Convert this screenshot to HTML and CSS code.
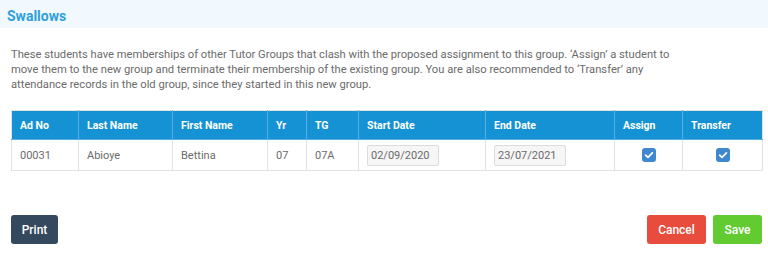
FILE: index.html
```html
<!DOCTYPE html>
<html>
<head>
<meta charset="utf-8">
<link rel="stylesheet" href="styles.css">
</head>
<body>
<div class="title-bar"><h1 class="title">Swallows</h1></div>
<div class="content">
  <p class="intro">These students have memberships of other Tutor Groups that clash with the proposed assignment to this group. ‘Assign’ a student to move them to the new group and terminate their membership of the existing group. You are also recommended to ‘Transfer’ any attendance records in the old group, since they started in this new group.</p>
  <table class="grid">
    <colgroup>
      <col class="c-ad"><col class="c-last"><col class="c-first"><col class="c-yr"><col class="c-tg"><col class="c-start"><col class="c-end"><col class="c-assign"><col class="c-transfer">
    </colgroup>
    <thead>
      <tr>
        <th>Ad No</th><th>Last Name</th><th>First Name</th><th>Yr</th><th>TG</th><th>Start Date</th><th>End Date</th><th>Assign</th><th>Transfer</th>
      </tr>
    </thead>
    <tbody>
      <tr>
        <td>00031</td><td>Abioye</td><td>Bettina</td><td>07</td><td>07A</td>
        <td><span class="date">02/09/2020</span></td>
        <td><span class="date">23/07/2021</span></td>
        <td class="center"><span class="check"><svg viewBox="0 0 14 14" width="14" height="14"><path d="M3.6 7.2 L6 9.4 L10.4 4.9" fill="none" stroke="#fff" stroke-width="1.7" stroke-linecap="round" stroke-linejoin="round"/></svg></span></td>
        <td class="center"><span class="check"><svg viewBox="0 0 14 14" width="14" height="14"><path d="M3.6 7.2 L6 9.4 L10.4 4.9" fill="none" stroke="#fff" stroke-width="1.7" stroke-linecap="round" stroke-linejoin="round"/></svg></span></td>
      </tr>
    </tbody>
  </table>
  <div class="actions">
    <button class="btn btn-print">Print</button>
    <div class="right">
      <button class="btn btn-cancel">Cancel</button>
      <button class="btn btn-save">Save</button>
    </div>
  </div>
</div>
</body>
</html>
```
FILE: styles.css
```css
html, body {
  margin: 0;
  padding: 0;
  background: #fff;
  font-family: Roboto, "Liberation Sans", Arial, sans-serif;
}
.title-bar {
  height: 28px;
  background: #f1f9fe;
  display: flex;
  align-items: center;
  padding-left: 7px;
}
.title {
  margin: 0;
  font-size: 14px;
  font-weight: 700;
  color: #2e9fdd;
  line-height: 16px;
  padding-top: 4px;
}
.content {
  padding: 0 6px 0 11px;
}
.intro {
  margin: 19px 0 0 0;
  width: 684px;
  font-size: 11.2px;
  line-height: 15px;
  color: #6b6b6b;
}
.grid {
  margin-top: 18px;
  width: 751px;
  border-collapse: collapse;
  table-layout: fixed;
  font-size: 10.5px;
}
.c-ad { width: 67px; }
.c-last { width: 94px; }
.c-first { width: 95px; }
.c-yr { width: 39px; }
.c-tg { width: 52px; }
.c-start { width: 127px; }
.c-end { width: 129px; }
.c-assign { width: 68px; }
.c-transfer { width: 80px; }
.grid th {
  background: #1592d3;
  color: #fff;
  font-weight: 700;
  text-align: left;
  height: 29px;
  padding: 0 8px;
  border: 1px solid #5aaedf;
  border-top-color: #e3e3e3;
  box-sizing: border-box;
}
.grid th:first-child { border-left-color: #e3e3e3; }
.grid th:last-child { border-right-color: #e3e3e3; }
.grid td {
  height: 31px;
  padding: 0 8px;
  color: #6b6b6b;
  font-size: 11px;
  border: 1px solid #e3e3e3;
  box-sizing: border-box;
}
.grid td.center { text-align: center; }
.date {
  display: inline-block;
  width: 72px;
  height: 21px;
  box-sizing: border-box;
  border: 1px solid #dcdcdc;
  border-radius: 2px;
  background: #f6f6f6;
  padding: 3px 0 0 3px;
  line-height: 14px;
  color: #6b6b6b;
  vertical-align: middle;
}
.check {
  display: inline-block;
  width: 14px;
  height: 14px;
  background: #3f88cf;
  border-radius: 3px;
  vertical-align: middle;
}
.check svg { display: block; }
.actions {
  margin-top: 44px;
  display: flex;
  justify-content: space-between;
  width: 751px;
}
.right { display: flex; gap: 7px; }
.btn {
  height: 29px;
  border: 0;
  border-radius: 3px;
  color: #fff;
  font-family: Roboto, "Liberation Sans", Arial, sans-serif;
  font-size: 12px;
  font-weight: 500;
  padding: 0;
  cursor: pointer;
}
.btn-print { width: 47px; background: #34495e; }
.btn-cancel { width: 59px; background: #e74c3c; }
.btn-save { width: 49px; background: #62cb31; }
```
